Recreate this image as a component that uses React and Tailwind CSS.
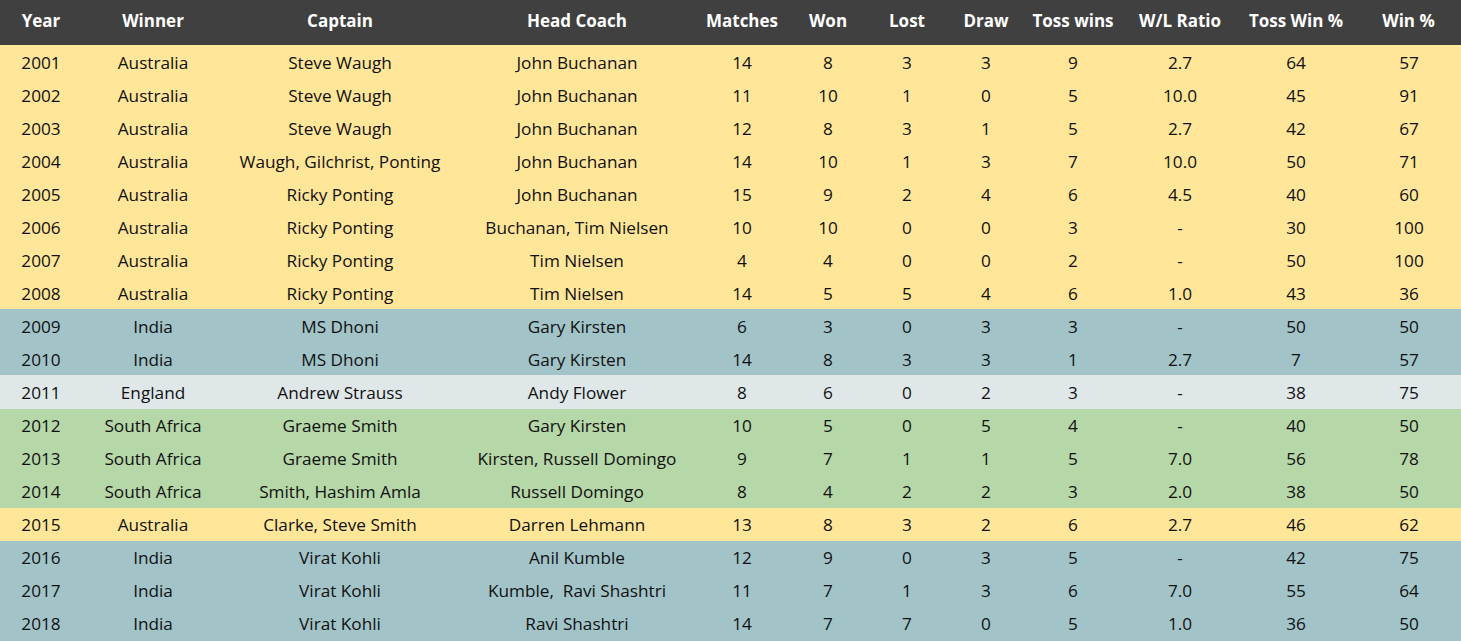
const rows = [
  ['2001', 'Australia', 'Steve Waugh', 'John Buchanan', 14, 8, 3, 3, 9, '2.7', 64, 57],
  ['2002', 'Australia', 'Steve Waugh', 'John Buchanan', 11, 10, 1, 0, 5, '10.0', 45, 91],
  ['2003', 'Australia', 'Steve Waugh', 'John Buchanan', 12, 8, 3, 1, 5, '2.7', 42, 67],
  ['2004', 'Australia', 'Waugh, Gilchrist, Ponting', 'John Buchanan', 14, 10, 1, 3, 7, '10.0', 50, 71],
  ['2005', 'Australia', 'Ricky Ponting', 'John Buchanan', 15, 9, 2, 4, 6, '4.5', 40, 60],
  ['2006', 'Australia', 'Ricky Ponting', 'Buchanan, Tim Nielsen', 10, 10, 0, 0, 3, '-', 30, 100],
  ['2007', 'Australia', 'Ricky Ponting', 'Tim Nielsen', 4, 4, 0, 0, 2, '-', 50, 100],
  ['2008', 'Australia', 'Ricky Ponting', 'Tim Nielsen', 14, 5, 5, 4, 6, '1.0', 43, 36],
  ['2009', 'India', 'MS Dhoni', 'Gary Kirsten', 6, 3, 0, 3, 3, '-', 50, 50],
  ['2010', 'India', 'MS Dhoni', 'Gary Kirsten', 14, 8, 3, 3, 1, '2.7', 7, 57],
  ['2011', 'England', 'Andrew Strauss', 'Andy Flower', 8, 6, 0, 2, 3, '-', 38, 75],
  ['2012', 'South Africa', 'Graeme Smith', 'Gary Kirsten', 10, 5, 0, 5, 4, '-', 40, 50],
  ['2013', 'South Africa', 'Graeme Smith', 'Kirsten, Russell Domingo', 9, 7, 1, 1, 5, '7.0', 56, 78],
  ['2014', 'South Africa', 'Smith, Hashim Amla', 'Russell Domingo', 8, 4, 2, 2, 3, '2.0', 38, 50],
  ['2015', 'Australia', 'Clarke, Steve Smith', 'Darren Lehmann', 13, 8, 3, 2, 6, '2.7', 46, 62],
  ['2016', 'India', 'Virat Kohli', 'Anil Kumble', 12, 9, 0, 3, 5, '-', 42, 75],
  ['2017', 'India', 'Virat Kohli', 'Kumble,\u00a0 Ravi Shashtri', 11, 7, 1, 3, 6, '7.0', 55, 64],
  ['2018', 'India', 'Virat Kohli', 'Ravi Shashtri', 14, 7, 7, 0, 5, '1.0', 36, 50],
]

const headers = ['Year', 'Winner', 'Captain', 'Head Coach', 'Matches', 'Won', 'Lost', 'Draw', 'Toss wins', 'W/L Ratio', 'Toss Win %', 'Win %']
const widths = ['w-[82px]', 'w-[142px]', 'w-[232px]', 'w-[242px]', 'w-[88px]', 'w-[84px]', 'w-[74px]', 'w-[84px]', 'w-[90px]', 'w-[124px]', 'w-[108px]', 'w-[111px]']

const rowBg = {
  Australia: 'bg-[#ffe699]',
  India: 'bg-[#a2c4c9]',
  England: 'bg-[#dfe7e9]',
  'South Africa': 'bg-[#b6d7a8]',
}

export default function App() {
  return (
    <div className="w-[1461px] h-[641px] overflow-hidden bg-[#a2c4c9]" style={{ fontFamily: '"Open Sans", sans-serif' }}>
      <table className="w-[1461px] table-fixed border-collapse text-[17.2px] text-[#111]">
        <colgroup>
          {widths.map((w, i) => <col key={i} className={w} />)}
        </colgroup>
        <thead>
          <tr className="h-[45px] bg-[#404040] text-white text-[17px]">
            {headers.map((h, i) => (
              <th key={h} className={`font-bold text-center p-0 pb-[4px] ${i === 11 ? 'pl-[6px]' : ''}`}>{h}</th>
            ))}
          </tr>
        </thead>
        <tbody>
          {rows.map(r => (
            <tr key={r[0]} className={`h-[33.06px] ${rowBg[r[1]]}`}>
              {r.map((c, i) => (
                <td key={i} className={`text-center p-0 pt-[2px] whitespace-nowrap ${i === 11 ? 'pl-[7px]' : ''}`}>{c}</td>
              ))}
            </tr>
          ))}
        </tbody>
      </table>
    </div>
  )
}
